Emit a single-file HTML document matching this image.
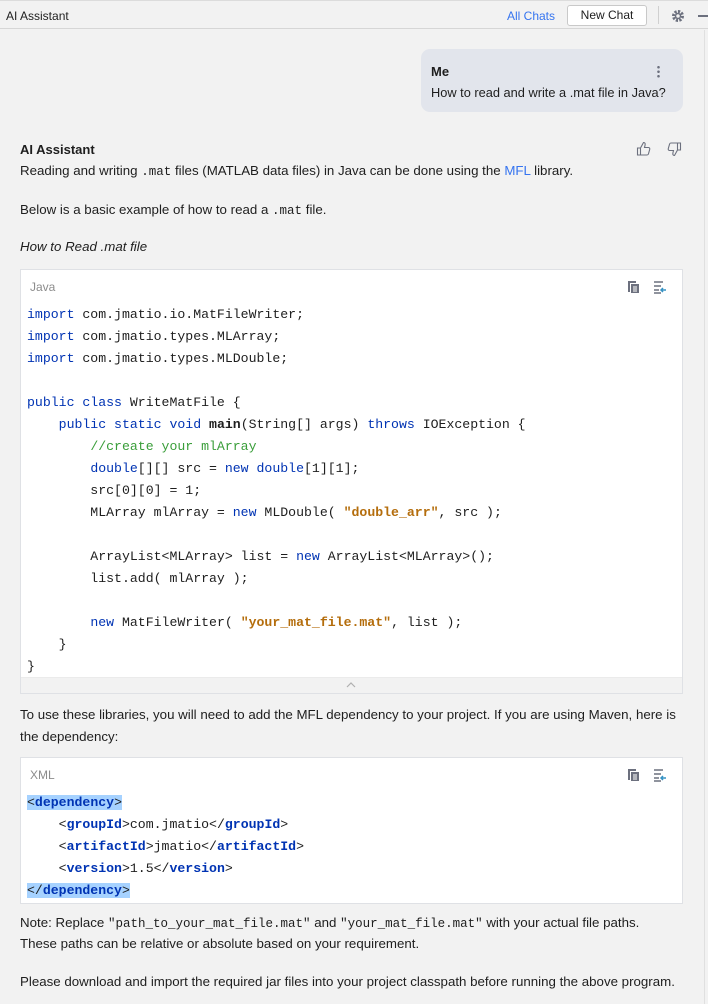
<!DOCTYPE html>
<html><head><meta charset="utf-8"><style>
*{margin:0;padding:0;box-sizing:border-box}
body{width:708px;height:1004px;background:#f2f2f2;font-family:"Liberation Sans",sans-serif;font-size:13.3px;color:#1e1e1e;position:relative;overflow:hidden}
.top{position:absolute;left:0;top:0;width:708px;height:29px;border-top:1px solid #dcdcdc;border-bottom:1px solid #d6d6d6;background:#f2f2f2}
.abs{position:absolute}
.mono{font-family:"Liberation Mono",monospace;font-size:13.2px}
.code{position:absolute;left:20px;width:663px;background:#fff;border:1px solid #dfe1e5}
.ln{position:absolute;left:6px;white-space:pre;line-height:22px}
.kw{color:#0033b3}.str{color:#b46d0c;font-weight:bold}.cm{color:#3a9e3a}.tag{color:#0033b3;font-weight:bold}
.hl{background:#a6d2ff}
p{position:absolute;left:20px;line-height:20px;white-space:nowrap}
.cd{font-family:"Liberation Mono",monospace;font-size:12.5px}
</style></head><body>
<div class="top">
<div class="abs" style="left:6px;top:8px;font-size:12px">AI Assistant</div>
<div class="abs" style="left:507px;top:8px;font-size:12px;color:#3574f0">All Chats</div>
<div class="abs" style="left:567px;top:4px;width:80px;height:21px;border:1px solid #c9c9c9;background:#fff;border-radius:3px;font-size:12px;text-align:center;line-height:19px">New Chat</div>
<div class="abs" style="left:658px;top:5px;width:1px;height:18px;background:#d0d0d0"></div>
<svg class="abs" style="left:671px;top:8px" width="14" height="14" viewBox="0 0 14 14"><circle cx="7" cy="7" r="4.5" fill="none" stroke="#6c707e" stroke-width="3" stroke-dasharray="2.2 1.3"/><circle cx="7" cy="7" r="2.5" fill="none" stroke="#6c707e" stroke-width="1.5"/></svg>
<div class="abs" style="left:698px;top:14px;width:10px;height:2px;background:#6c707e"></div>
</div>
<div class="abs" style="left:704px;top:30px;width:1px;height:974px;background:#e0e0e0"></div>
<div class="abs" style="left:421px;top:49px;width:262px;height:63px;background:#e2e5ec;border-radius:9px"></div>
<div class="abs" style="left:431px;top:64px;font-weight:bold;font-size:13px">Me</div>
<div class="abs" style="left:657px;top:65px;width:3px;height:13px;background:radial-gradient(circle,#6c707e 1.2px,transparent 1.4px) 0 0/3px 4.5px"></div>
<div class="abs" style="left:431px;top:85px;font-size:12.8px">How to read and write a .mat file in Java?</div>
<div class="abs" style="left:20px;top:142px;font-weight:bold;font-size:13px">AI Assistant</div>
<svg class="abs" style="left:636px;top:141px" width="46" height="16" viewBox="0 0 46 16"><path d="M1.5 7h3v7h-3zM4.5 7l3-5.5c1.5 0 2 1 1.5 3l-.5 2h4c1 0 1.5 1 1.2 2l-1.3 4.5c-.2.6-.7 1-1.3 1h-6.6" fill="none" stroke="#6c707e" stroke-width="1.1"/><path d="M44.5 9h-3v-7h3zM41.5 9l-3 5.5c-1.5 0-2-1-1.5-3l.5-2h-4c-1 0-1.5-1-1.2-2l1.3-4.5c.2-.6.7-1 1.3-1h6.6" fill="none" stroke="#6c707e" stroke-width="1.1"/></svg>
<p style="top:161px">Reading and writing <span class="cd">.mat</span> files (MATLAB data files) in Java can be done using the <span style="color:#3574f0">MFL</span> library.</p>
<p style="top:200px">Below is a basic example of how to read a <span class="cd">.mat</span> file.</p>
<p style="top:237px;font-style:italic">How to Read .mat file</p>
<div class="code mono" style="top:269px;height:425px">
<div class="abs" style="left:9px;top:10px;font-family:'Liberation Sans',sans-serif;font-size:12px;color:#8c8c8c">Java</div>
<svg class="abs" style="left:606px;top:10px" width="40" height="14" viewBox="0 0 40 14"><path d="M1 1h8v2H3v9H1z" fill="#6c707e"/><rect x="4" y="4" width="8" height="9" fill="#6c707e"/><path d="M6 7h4M6 9h4M6 11h4" stroke="#fff"/><path d="M27 2h9M27 6h7M27 10h5M27 13h7" stroke="#6c707e" stroke-width="1.5"/><path d="M34 10h5M36 8l-2 2 2 2" stroke="#3592c4" stroke-width="1.5" fill="none"/></svg>
<div class="ln" style="top:34px"><span class="kw">import</span> com.jmatio.io.MatFileWriter;
<span class="kw">import</span> com.jmatio.types.MLArray;
<span class="kw">import</span> com.jmatio.types.MLDouble;

<span class="kw">public class</span> WriteMatFile {
    <span class="kw">public static void</span> <b>main</b>(String[] args) <span class="kw">throws</span> IOException {
        <span class="cm">//create your mlArray</span>
        <span class="kw">double</span>[][] src = <span class="kw">new double</span>[1][1];
        src[0][0] = 1;
        MLArray mlArray = <span class="kw">new</span> MLDouble( <span class="str">"double_arr"</span>, src );

        ArrayList&lt;MLArray&gt; list = <span class="kw">new</span> ArrayList&lt;MLArray&gt;();
        list.add( mlArray );

        <span class="kw">new</span> MatFileWriter( <span class="str">"your_mat_file.mat"</span>, list );
    }
}</div>
<div class="abs" style="left:0;top:407px;width:661px;height:16px;background:#f2f2f2;border-top:1px solid #ebebeb"></div>
<svg class="abs" style="left:324px;top:411px" width="12" height="8"><path d="M2 6l4-4 4 4" stroke="#b0b0b0" fill="none" stroke-width="1.2"/></svg>
</div>
<p style="top:705px">To use these libraries, you will need to add the MFL dependency to your project. If you are using Maven, here is</p>
<p style="top:727px">the dependency:</p>
<div class="code mono" style="top:757px;height:147px">
<div class="abs" style="left:9px;top:10px;font-family:'Liberation Sans',sans-serif;font-size:12px;color:#8c8c8c">XML</div>
<svg class="abs" style="left:606px;top:10px" width="40" height="14" viewBox="0 0 40 14"><path d="M1 1h8v2H3v9H1z" fill="#6c707e"/><rect x="4" y="4" width="8" height="9" fill="#6c707e"/><path d="M6 7h4M6 9h4M6 11h4" stroke="#fff"/><path d="M27 2h9M27 6h7M27 10h5M27 13h7" stroke="#6c707e" stroke-width="1.5"/><path d="M34 10h5M36 8l-2 2 2 2" stroke="#3592c4" stroke-width="1.5" fill="none"/></svg>
<div class="ln" style="top:34px"><span class="hl">&lt;<span class="tag">dependency</span>&gt;</span>
    &lt;<span class="tag">groupId</span>&gt;com.jmatio&lt;/<span class="tag">groupId</span>&gt;
    &lt;<span class="tag">artifactId</span>&gt;jmatio&lt;/<span class="tag">artifactId</span>&gt;
    &lt;<span class="tag">version</span>&gt;1.5&lt;/<span class="tag">version</span>&gt;
<span class="hl">&lt;/<span class="tag">dependency</span>&gt;</span></div>
</div>
<p style="top:913px">Note: Replace <span class="cd">"path_to_your_mat_file.mat"</span> and <span class="cd">"your_mat_file.mat"</span> with your actual file paths.</p>
<p style="top:934px">These paths can be relative or absolute based on your requirement.</p>
<p style="top:972px">Please download and import the required jar files into your project classpath before running the above program.</p>
</body></html>
